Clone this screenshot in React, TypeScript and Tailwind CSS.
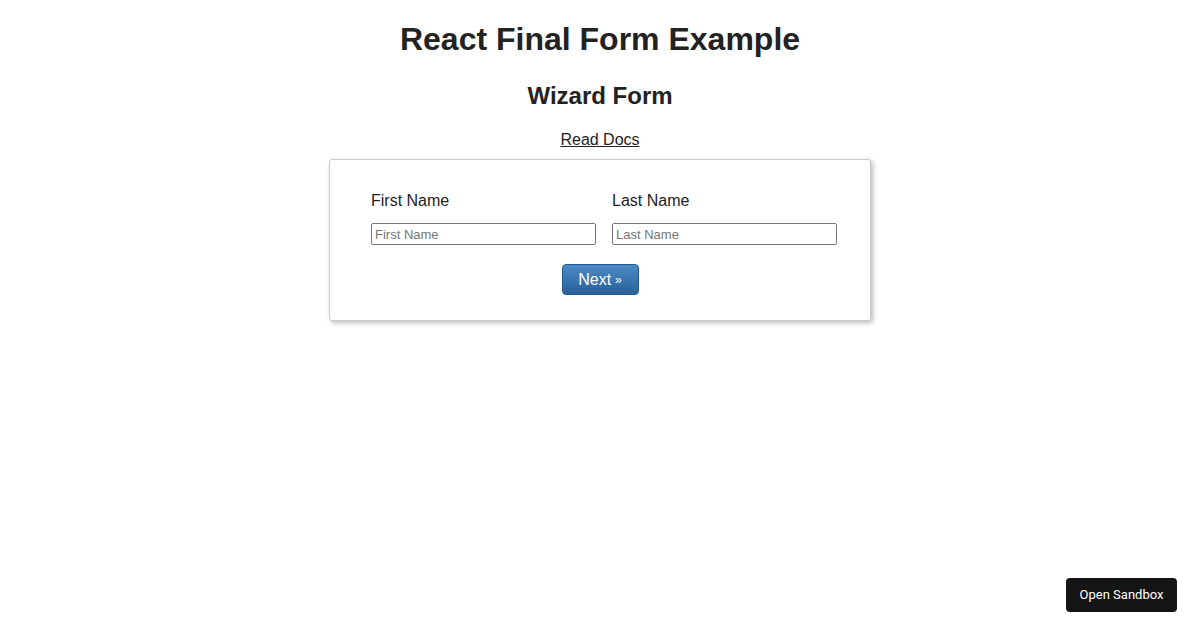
import React from "react";

const Field = ({ label }: { label: string }) => (
  <div className="flex flex-col">
    <label className="text-[16px] leading-[18.4px] text-[#222]">{label}</label>
    <input
      type="text"
      placeholder={label}
      className="mt-[13px] h-[22px] w-full rounded-[2px] border border-[#767676] bg-white px-[3px] text-[13px] text-[#222] outline-none placeholder:text-[#757575]"
    />
  </div>
);

const App = () => {
  return (
    <div
      className="min-h-[630px] w-full bg-white text-[#222]"
      style={{ fontFamily: '"Liberation Sans", Arial, Helvetica, sans-serif' }}
    >
      <h1 className="pt-[21px] text-center text-[32px] font-bold leading-[36.8px]">
        React Final Form Example
      </h1>
      <h2 className="mt-[24px] text-center text-[24px] font-bold leading-[27.6px]">
        Wizard Form
      </h2>
      <div className="mt-[22px] text-center text-[16px] leading-[18.4px]">
        <a href="#" className="text-[#222] underline">
          Read Docs
        </a>
      </div>

      <form className="mx-auto mt-[9px] w-[542px] rounded-[3px] border border-[#ccc] bg-white pt-[32px] pb-[25px] shadow-[2px_2px_5px_#bbb]">
        <div className="grid grid-cols-2 gap-x-[16px] pl-[41px] pr-[33px]">
          <Field label="First Name" />
          <Field label="Last Name" />
        </div>
        <div className="mt-[19px] flex justify-center">
          <button
            type="submit"
            className="flex h-[31px] w-[77px] items-center justify-center rounded-[4px] border border-[#235a8e] bg-gradient-to-b from-[#4b8bc6] to-[#2a6198] text-[16px] text-white"
          >
            Next <span className="ml-[4px] text-[12px]">»</span>
          </button>
        </div>
      </form>

      <button
        className="fixed bottom-[18px] right-[23px] h-[34px] w-[111px] rounded-[4px] bg-[#151515] text-[13px] text-white"
        style={{ fontFamily: "Roboto, Inter, sans-serif" }}
      >
        Open Sandbox
      </button>
    </div>
  );
};

export default App;
